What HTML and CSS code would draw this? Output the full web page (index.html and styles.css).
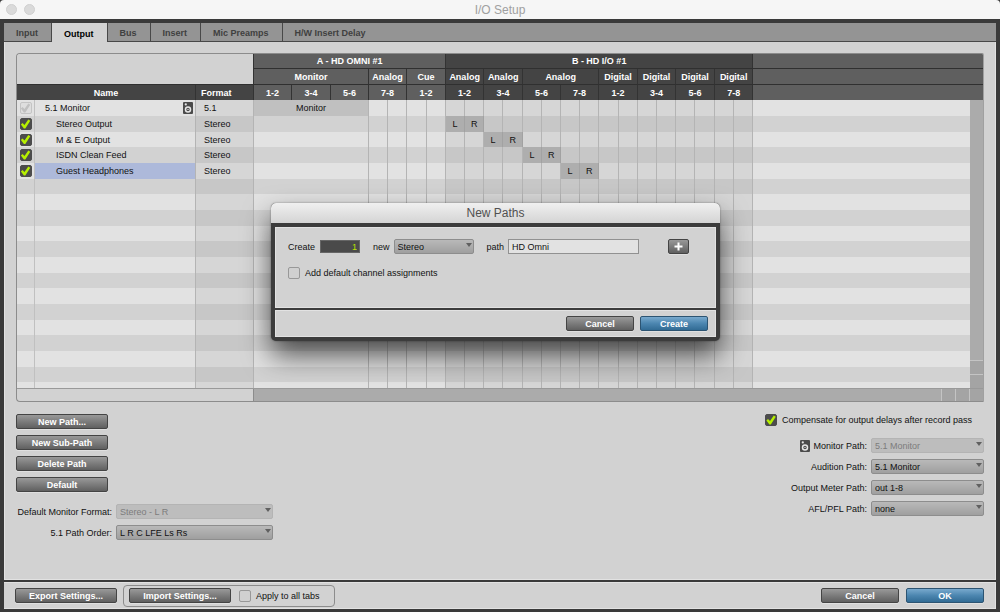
FILE: index.html
```html
<!DOCTYPE html>
<html lang="en">
<head>
<meta charset="utf-8">
<title>I/O Setup</title>
<link rel="stylesheet" href="styles.css">
</head>
<body>
<svg class="defs" aria-hidden="true">
  <symbol id="speaker" viewBox="0 0 10 12">
    <rect width="10" height="12" rx="1" fill="#4b4b4b"/>
    <circle cx="5" cy="7.400" r="2.500" fill="none" stroke="#e6e6e6" stroke-width="1.500"/>
    <circle cx="5" cy="7.400" r=".7" fill="#e6e6e6"/>
    <circle cx="2.800" cy="2.400" r="1.100" fill="#e6e6e6"/>
  </symbol>
</svg>
<div class="window">
  <header class="titlebar">
    <span class="dots"><i></i><i></i></span>
    <h1>I/O Setup</h1>
  </header>
  <nav class="tabs">
    <button class="tab">Input</button>
    <button class="tab active">Output</button>
    <button class="tab">Bus</button>
    <button class="tab">Insert</button>
    <button class="tab">Mic Preamps</button>
    <button class="tab last">H/W Insert Delay</button>
  </nav>
  <main class="panel">
    <section class="matrix">
      <table class="grid">
        <colgroup id="cols"></colgroup>
        <thead>
          <tr>
            <th colspan="3" rowspan="2" class="blank"></th>
            <th colspan="10" class="a">A - HD OMNI #1</th>
            <th colspan="16" class="b">B - HD I/O #1</th>
            <th colspan="2" class="a"></th>
          </tr>
          <tr class="kinds">
            <th colspan="6" class="a">Monitor</th>
            <th colspan="2" class="a">Analog</th>
            <th colspan="2" class="a">Cue</th>
            <th colspan="2" class="b">Analog</th>
            <th colspan="2" class="b">Analog</th>
            <th colspan="4" class="b">Analog</th>
            <th colspan="2" class="b">Digital</th>
            <th colspan="2" class="b">Digital</th>
            <th colspan="2" class="b">Digital</th>
            <th colspan="2" class="b">Digital</th>
            <th colspan="2" class="a"></th>
          </tr>
          <tr>
            <th colspan="2" class="b">Name</th>
            <th class="b format-head">Format</th>
            <th colspan="2" class="a">1-2</th>
            <th colspan="2" class="a">3-4</th>
            <th colspan="2" class="a">5-6</th>
            <th colspan="2" class="a">7-8</th>
            <th colspan="2" class="a">1-2</th>
            <th colspan="2" class="b">1-2</th>
            <th colspan="2" class="b">3-4</th>
            <th colspan="2" class="b">5-6</th>
            <th colspan="2" class="b">7-8</th>
            <th colspan="2" class="b">1-2</th>
            <th colspan="2" class="b">3-4</th>
            <th colspan="2" class="b">5-6</th>
            <th colspan="2" class="b">7-8</th>
            <th colspan="2" class="a"></th>
          </tr>
        </thead>
        <tbody id="rows"></tbody>
      </table>
      <div class="hscroll">
        <span class="hscroll-left"></span>
        <span class="hscroll-track"><i></i><i></i><i></i></span>
      </div>
    </section>
    <section class="options">
      <div class="left">
        <div class="stack">
          <button class="btn">New Path...</button>
          <button class="btn">New Sub-Path</button>
          <button class="btn">Delete Path</button>
          <button class="btn">Default</button>
        </div>
        <div class="fields">
          <label for="fmt">Default Monitor Format:</label>
          <span class="select off"><select id="fmt" disabled><option>Stereo - L R</option></select></span>
          <label for="order">5.1 Path Order:</label>
          <span class="select"><select id="order"><option>L R C LFE Ls Rs</option></select></span>
        </div>
      </div>
      <div class="right">
        <label class="check"><input type="checkbox" checked>Compensate for output delays after record pass</label>
        <div class="fields">
          <label for="mon"><svg class="speaker"><use href="#speaker"/></svg>Monitor Path:</label>
          <span class="select off"><select id="mon" disabled><option>5.1 Monitor</option></select></span>
          <label for="aud">Audition Path:</label>
          <span class="select"><select id="aud"><option>5.1 Monitor</option></select></span>
          <label for="meter">Output Meter Path:</label>
          <span class="select"><select id="meter"><option>out 1-8</option></select></span>
          <label for="afl">AFL/PFL Path:</label>
          <span class="select"><select id="afl"><option>none</option></select></span>
        </div>
      </div>
    </section>
  </main>
  <footer class="bottom">
    <button class="btn settings">Export Settings...</button>
    <div class="group">
      <button class="btn settings">Import Settings...</button>
      <label class="check"><input type="checkbox">Apply to all tabs</label>
    </div>
    <div class="actions">
      <button class="btn">Cancel</button>
      <button class="btn primary">OK</button>
    </div>
  </footer>

  <div class="dialog" role="dialog" aria-labelledby="dlg">
    <h2 id="dlg">New Paths</h2>
    <div class="dialog-frame">
      <div class="dialog-body">
        <div class="line">
          <label for="count">Create</label>
          <input id="count" class="count" type="text" value="1">
          <label for="kind" class="new">new</label>
          <span class="select kind"><select id="kind"><option>Stereo</option></select></span>
          <label for="path" class="new">path</label>
          <input id="path" class="path" type="text" value="HD Omni">
          <button class="btn add" aria-label="Add"><svg viewBox="0 0 9 9"><path d="M4.500 0.500v8M0.500 4.500h8" stroke="#fff" stroke-width="2"/></svg></button>
        </div>
        <label class="check"><input type="checkbox">Add default channel assignments</label>
      </div>
      <div class="dialog-foot">
        <button class="btn">Cancel</button>
        <button class="btn primary">Create</button>
      </div>
    </div>
  </div>
</div>
<script src="app.js"></script>
</body>
</html>
```

FILE: styles.css
```css
* { box-sizing: border-box; }
body {
  margin: 0;
  font: 9px/12px "Liberation Sans", Arial, sans-serif;
  color: #111;
}
button, input, select { font: inherit; color: inherit; margin: 0; }
.defs { display: none; }

.window {
  position: relative;
  display: flex;
  flex-direction: column;
  min-height: 100vh;
  background: #3a3a3a;
  padding-bottom: 3px;
}
.titlebar {
  display: grid;
  grid-template-columns: 1fr auto 1fr;
  align-items: center;
  height: 19px;
  background: #f6f6f6;
  border-radius: 4px 4px 0 0;
}
.titlebar h1 {
  margin: 0;
  font-size: 12px;
  line-height: 16px;
  font-weight: normal;
  color: #a0a0a0;
}
.dots { display: flex; gap: 7px; padding-left: 6px; }
.dots i { width: 11px; height: 11px; border-radius: 50%; background: #dadada; border: 1px solid #d0d0d0; }

.tabs {
  display: flex;
  height: 19px;
  margin: 4px 4px 0;
  background: #949494;
  border-bottom: 1px solid #484848;
  flex: none;
}
.tab {
  border: 0;
  border-right: 1px solid #484848;
  background: none;
  padding: 2px 13px 0 12px;
  font-weight: bold;
  color: #404040;
}
.tab.active { background: #d2d2d2; color: #000; margin-bottom: -1px; }
.tab.last { border-right: 0; }

.panel {
  flex: 1;
  margin: 0 4px;
  padding: 11px;
  background: #d2d2d2;
  border: solid #e2e2e2;
  border-width: 0 1px 1px;
}
.matrix {
  border: 1px solid #8c8c8c;
  border-right-color: #a0a0a0;
  border-radius: 4px 2px 0 4px;
  overflow: hidden;
}
.grid {
  width: 100%;
  table-layout: fixed;
  border-collapse: separate;
  border-spacing: 0;
}
.grid th, .grid td { padding: 0; overflow: hidden; white-space: nowrap; line-height: 12px; }
.grid thead tr { height: 15px; }
.grid thead .kinds { height: 16px; }
.grid th { color: #fff; border-right: 1px solid #333; border-bottom: 1px solid #303030; }
.grid tr > th:last-child { border-right: 0; }
.grid thead tr:last-child th { border-bottom: 0; }
.grid .a { background: #5f5f5f; }
.grid .b { background: #444; }
.grid .blank { background: #d2d2d2; }
.grid .format-head { text-align: left; padding-left: 5px; }
.col-check { width: 18px; }
.col-name { width: 161px; }
.col-format { width: 58px; }
.col-half { width: 19px; }
.col-half.wide { width: 20px; }
.col-scroll { width: 13px; }

.grid tbody tr { height: 16px; background: #d2d2d2; }
.grid tbody tr:nth-child(odd) { background: #e2e2e2; }
.grid tbody tr:nth-child(3n) { height: 15px; }
.grid tbody tr:last-child { height: 6px; }
.grid td { border-right: 1px solid #b4b4b4; }
.grid td.check-cell { border-right-color: #c0c0c0; }
.check-cell input { display: grid; margin: 0 auto; }
.grid td.name { padding-left: 21px; }
.grid td.parent { padding-left: 10px; }
.grid td.selected { background: #adb9da; }
.grid td.format { background: rgba(0, 0, 0, .05); padding-left: 8px; }
.grid td.open { border-right-color: transparent; }
.grid td.shade { background: rgba(0, 0, 0, .05); }
.grid td.assign { background: #aeaeae; text-align: center; border-right-color: #a2a2a2; }
.grid td.merged { background: #c0c0c0; text-align: center; }
.grid td.rest { border-right-color: transparent; }
.grid td.vscroll { background: #ababab; border: 0; vertical-align: bottom; }
.vscroll i { display: block; height: 14px; border-top: 1px solid #c4c4c4; background: #a4a4a4; }
.name-line { display: flex; justify-content: space-between; align-items: center; padding-right: 2px; }
.speaker { width: 10px; height: 12px; flex: none; }

.hscroll { display: flex; height: 13px; border-top: 1px solid #999; }
.hscroll-left { width: 237px; border-right: 1px solid #8c8c8c; }
.hscroll-track { flex: 1; display: flex; justify-content: flex-end; background: #ababab; }
.hscroll-track i { width: 14px; border-left: 1px solid #c4c4c4; background: #a4a4a4; }

input[type="checkbox"] {
  appearance: none;
  width: 12px;
  height: 12px;
  flex: none;
  border: 1px solid #989898;
  border-radius: 2px;
  background: #d0d0d0;
  display: grid;
  place-items: center;
}
input[type="checkbox"]:checked { background: #4c4c4c; border-color: #4c4c4c; }
input[type="checkbox"]:checked::before {
  content: "";
  width: 10px;
  height: 10px;
  background: #b6f000;
  clip-path: polygon(4% 54%, 20% 40%, 40% 60%, 78% 6%, 98% 18%, 48% 94%, 34% 94%);
}
input[type="checkbox"]:disabled { background: #dedede; border-color: #c4c4c4; }
input[type="checkbox"]:disabled::before { background: #c0c0c0; }
.check { display: flex; align-items: center; gap: 5px; }

.btn {
  height: 15px;
  padding: 1px 0 0;
  border: 1px solid #444;
  border-radius: 2px;
  background: linear-gradient(#999, #7c7c7c 50%, #606060);
  color: #fff;
  font-weight: bold;
  line-height: 12px;
  text-align: center;
  box-shadow: 0 1px 0 #e0e0e0;
}
.btn.primary { background: linear-gradient(#78a9cd, #4c86b0 50%, #316b94); border-color: #2c5472; }

.select { position: relative; display: flex; }
.select select {
  appearance: none;
  width: 100%;
  height: 15px;
  padding: 1px 12px 0 3px;
  border: 1px solid #8d8d8d;
  border-radius: 2px;
  background: linear-gradient(#b9b9b9, #9f9f9f);
  line-height: 12px;
}
.select::after {
  content: "";
  position: absolute;
  top: 4px;
  right: 2px;
  border: solid transparent;
  border-width: 4px 3px 0;
  border-top-color: #606060;
}
.select.off select { background: #bdbdbd; border-color: #b4b4b4; color: #7c7c7c; opacity: 1; }

.options { display: flex; justify-content: space-between; padding-top: 12px; }
.stack { display: grid; width: 92px; gap: 6px; }
.fields { display: grid; gap: 6px 4px; align-items: center; }
.fields label { display: flex; justify-content: flex-end; align-items: center; gap: 3px; white-space: nowrap; }
.left .fields { grid-template-columns: 96px 157px; padding-top: 12px; }
.right { display: flex; flex-direction: column; align-items: flex-end; }
.right .check { width: 219px; white-space: nowrap; }
.right .fields { grid-template-columns: auto 113px; padding-top: 12px; }

.bottom {
  display: flex;
  align-items: center;
  gap: 6px;
  height: 27px;
  margin: 2px 4px 0;
  padding: 0 11px;
  background: #d2d2d2;
  border: 1px solid #e2e2e2;
  border-left: 0;
}
.bottom .settings { width: 102px; }
.group {
  display: flex;
  align-items: center;
  gap: 8px;
  height: 22px;
  padding: 0 14px 0 5px;
  border: 1px solid #8c8c8c;
  border-radius: 4px;
}
.actions { display: flex; gap: 7px; margin-left: auto; }
.actions .btn { width: 78px; }

.dialog {
  position: absolute;
  top: 203px;
  left: 271px;
  width: 449px;
  border-radius: 5px;
  background: #3c3c3c;
  box-shadow: 0 14px 28px rgba(0, 0, 0, .65), 0 0 2px rgba(0, 0, 0, .4);
}
.dialog h2 {
  margin: 0;
  height: 20px;
  border-radius: 5px 5px 0 0;
  background: linear-gradient(#f0f0f0, #d4d4d4);
  color: #505050;
  font-size: 12px;
  font-weight: normal;
  line-height: 20px;
  text-align: center;
}
.dialog-frame { display: grid; gap: 2px; padding: 4px; }
.dialog-body, .dialog-foot { background: #d2d2d2; border: 1px solid #e2e2e2; }
.dialog-body { height: 81px; padding: 11px 12px 0; }
.line { display: flex; align-items: center; }
.dialog-body .check { margin-top: 13px; }
.dialog-foot { display: flex; justify-content: flex-end; align-items: center; gap: 6px; height: 27px; padding-right: 7px; }
.dialog-foot .btn { width: 68px; }
.count { width: 40px; height: 13px; margin-left: 5px; padding: 0 2px; border: 1px solid #666; background: #4a4a4a; color: #b6e000; text-align: right; }
.new { margin-left: 13px; }
.kind { width: 80px; margin-left: 4px; }
.path { width: 131px; height: 15px; margin-left: 4px; padding: 0 3px; border: 1px solid #919191; background: #e2e2e2; }
.add { width: 21px; margin-left: 29px; padding: 0; display: grid; place-items: center; }
.add svg { width: 9px; height: 9px; }
```

FILE: app.js
```js
const HALVES = 26;
const ROWS = 19;
const paths = [
  { name: "5.1 Monitor", format: "5.1", parent: true },
  { name: "Stereo Output", format: "Stereo", at: 10 },
  { name: "M & E Output", format: "Stereo", at: 12 },
  { name: "ISDN Clean Feed", format: "Stereo", at: 14 },
  { name: "Guest Headphones", format: "Stereo", at: 16, selected: true }
];

function add(parent, tag, className, text) {
  const el = document.createElement(tag);
  if (className) el.className = className;
  if (text) el.textContent = text;
  parent.append(el);
  return el;
}

const cols = document.getElementById("cols");
["col-check", "col-name", "col-format"].forEach(c => add(cols, "col", c));
for (let i = 0; i < HALVES; i++) add(cols, "col", i % 5 === 3 ? "col-half wide" : "col-half");
add(cols, "col");
add(cols, "col", "col-scroll");

const body = document.getElementById("rows");
for (let r = 0; r < ROWS; r++) {
  const path = paths[r];
  const tr = add(body, "tr");
  const check = add(tr, "td", "check-cell");
  const name = add(tr, "td", "name");
  add(tr, "td", "format", path && path.format);
  if (path) {
    const box = add(check, "input");
    box.type = "checkbox";
    box.checked = true;
    box.disabled = !!path.parent;
    box.setAttribute("aria-label", path.name);
    if (path.selected) name.classList.add("selected");
    if (path.parent) {
      name.classList.add("parent");
      name.innerHTML = '<div class="name-line">' + path.name +
        '<svg class="speaker"><use href="#speaker"/></svg></div>';
    } else {
      name.textContent = path.name;
    }
  }
  let first = 0;
  if (path && path.parent) {
    add(tr, "td", "merged", "Monitor").colSpan = 6;
    first = 6;
  }
  for (let i = first; i < HALVES; i++) {
    const assigned = path && path.at !== undefined && (i === path.at || i === path.at + 1);
    const cls = assigned ? "assign" : i < 5 ? "open" : i >= 10 ? "shade" : "";
    add(tr, "td", cls, assigned ? (i === path.at ? "L" : "R") : "");
  }
  add(tr, "td", "rest");
  if (r === 0) {
    const scroll = add(tr, "td", "vscroll");
    scroll.rowSpan = ROWS;
    add(scroll, "i");
    add(scroll, "i");
  }
}
```
